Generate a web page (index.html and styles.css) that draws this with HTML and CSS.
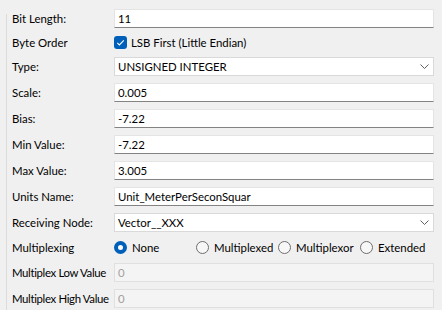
FILE: index.html
```html
<!DOCTYPE html>
<html>
<head>
<meta charset="utf-8">
<link rel="stylesheet" href="styles.css">
</head>
<body>
<div class="page">
  <div class="rail"></div>
  <div class="form">
    <div class="label r-std">Bit Length:</div>
    <div class="field text r-std">11</div>

    <div class="label r-chk">Byte Order</div>
    <div class="check-row r-chk">
      <span class="checkbox"><svg width="13" height="13" viewBox="0 0 13 13"><path d="M3.3 6.8 L5.4 8.9 L9.8 4.4" fill="none" stroke="#fff" stroke-width="1.1"/></svg></span>
      <span>LSB First (Little Endian)</span>
    </div>

    <div class="label r-std">Type:</div>
    <div class="field combo r-std"><span>UNSIGNED INTEGER</span><svg class="chev" width="9" height="5" viewBox="0 0 9 5"><path d="M0.5 0.5 L4.5 4.5 L8.5 0.5" fill="none" stroke="#606060" stroke-width="1"/></svg></div>

    <div class="label r-std">Scale:</div>
    <div class="field text r-std">0.005</div>

    <div class="label r-std">Bias:</div>
    <div class="field text r-std">-7.22</div>

    <div class="label r-std">Min Value:</div>
    <div class="field text r-std">-7.22</div>

    <div class="label r-std">Max Value:</div>
    <div class="field text r-std">3.005</div>

    <div class="label r-std">Units Name:</div>
    <div class="field text r-std">Unit_MeterPerSeconSquar</div>

    <div class="label r-std">Receiving Node:</div>
    <div class="field combo r-std"><span>Vector__XXX</span><svg class="chev" width="9" height="5" viewBox="0 0 9 5"><path d="M0.5 0.5 L4.5 4.5 L8.5 0.5" fill="none" stroke="#606060" stroke-width="1"/></svg></div>

    <div class="label r-radio">Multiplexing</div>
    <div class="radios r-radio">
      <span class="opt"><span class="radio on"></span>None</span>
      <span class="opt"><span class="radio"></span>Multiplexed</span>
      <span class="opt"><span class="radio"></span>Multiplexor</span>
      <span class="opt"><span class="radio"></span>Extended</span>
    </div>

    <div class="label tight r-std">Multiplex Low Value</div>
    <div class="field disabled r-std">0</div>

    <div class="label tight r-std">Multiplex High Value</div>
    <div class="field disabled r-std">0</div>
  </div>
</div>
</body>
</html>
```
FILE: styles.css
```css
html, body {
  margin: 0;
  padding: 0;
  background: #f0f0f0;
  overflow: hidden;
}
body {
  width: 442px;
  height: 310px;
  font-family: "Lato", "Liberation Sans", sans-serif;
  font-size: 11.4px;
  color: #000;
}
.page {
  display: flex;
  height: 310px;
}
.rail {
  width: 1px;
  margin-left: 6px;
  margin-top: 14px;
  background: #dcdcdc;
}
.form {
  margin-left: 5px;
  padding-top: 9px;
  display: grid;
  grid-template-columns: 102px 320px;
  row-gap: 7px;
  align-content: start;
}
.label {
  display: flex;
  align-items: center;
  white-space: nowrap;
}
.tight {
  letter-spacing: -0.35px;
}
.r-std { height: 19px; }
.r-chk { height: 15px; }
.r-radio { height: 17px; }
.field {
  box-sizing: border-box;
  height: 19px;
  display: flex;
  align-items: center;
  padding-left: 3px;
  background: #fff;
  white-space: nowrap;
}
.text {
  border: 1px solid #e4e4e4;
  border-bottom-color: #838383;
}
.combo {
  border: 1px solid #d9d9d9;
  justify-content: space-between;
  padding-right: 4px;
}
.disabled {
  background: #f4f4f4;
  border: 1px solid #e0e0e0;
  color: #a0a0a0;
}
.check-row {
  display: flex;
  align-items: center;
  gap: 4px;
}
.checkbox {
  width: 13px;
  height: 13px;
  border-radius: 3px;
  background: #005fb8;
  display: block;
}
.checkbox svg { display: block; }
.radios {
  display: grid;
  grid-template-columns: repeat(4, 82px);
  align-items: center;
}
.opt {
  display: flex;
  align-items: center;
  gap: 5px;
  white-space: nowrap;
}
.radio {
  box-sizing: border-box;
  width: 13px;
  height: 13px;
  border-radius: 50%;
  border: 1px solid #6e6e6e;
  background: #f7f7f7;
  flex: none;
}
.radio.on {
  border: 4px solid #005fb8;
  background: #fff;
}
```
